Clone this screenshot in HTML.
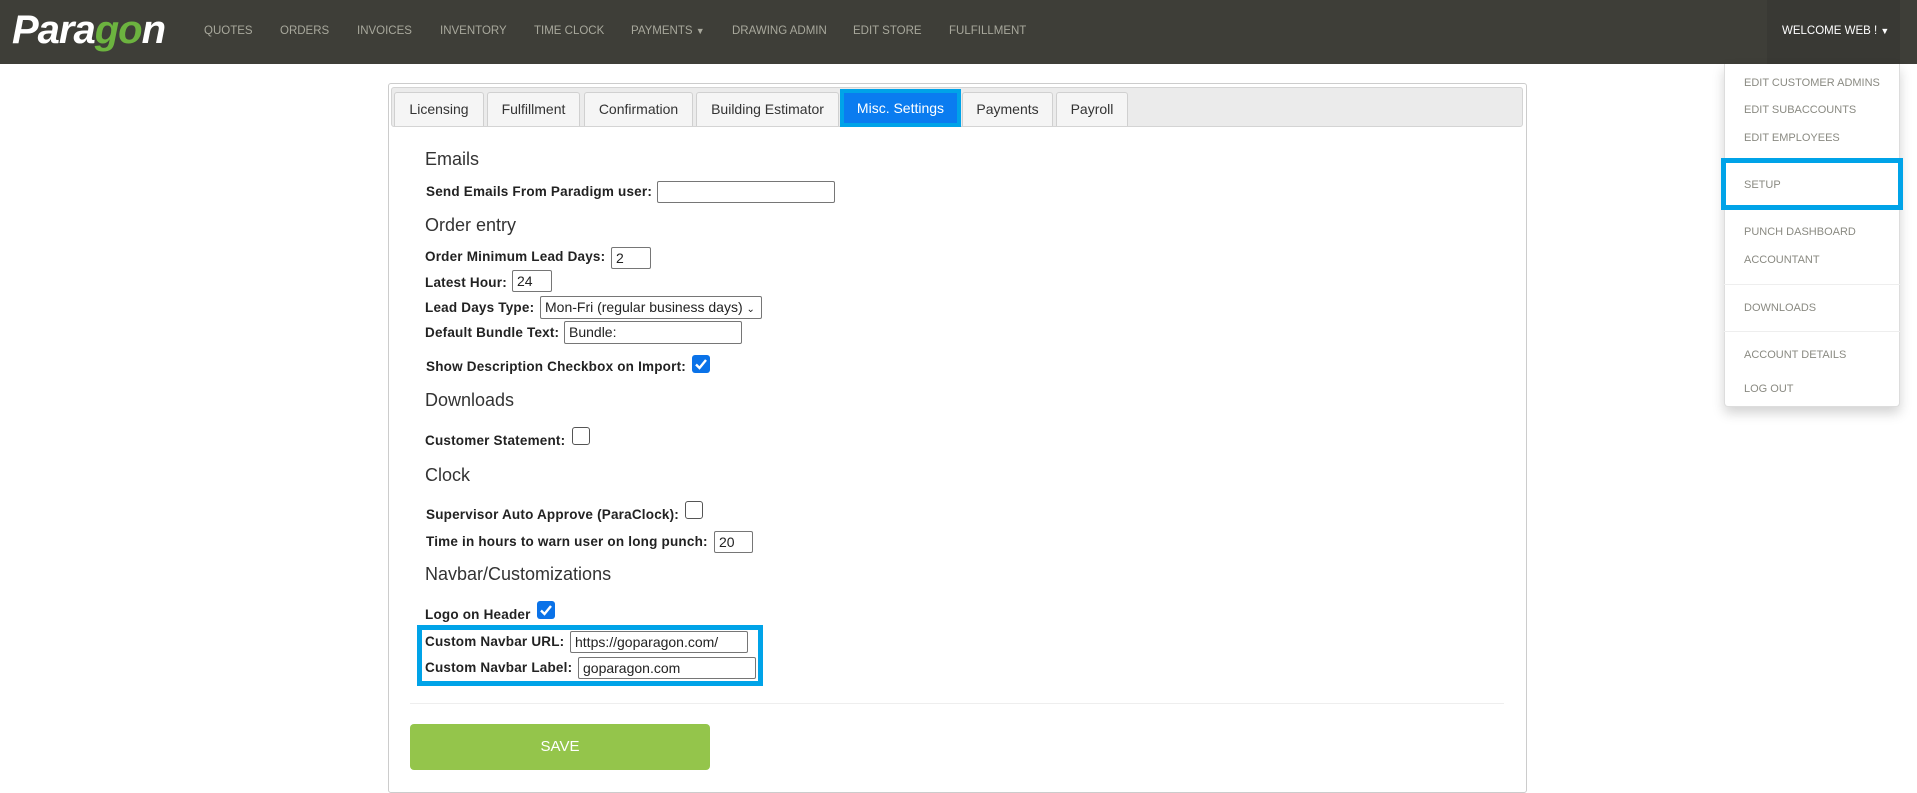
<!DOCTYPE html>
<html><head><meta charset="utf-8"><style>
*{box-sizing:border-box;margin:0;padding:0}
body{width:1917px;height:792px;position:relative;overflow:hidden;background:#fff;font-family:"Liberation Sans",Arial,sans-serif;color:#222}
.a{position:absolute;white-space:nowrap}
.nav{left:0;top:0;width:1917px;height:64px;background:#3e3e38}
.ni{top:25px;font-size:11.5px;color:#a8a89c}
.dd{left:1724px;top:64px;width:176px;height:343px;background:#fff;border:1px solid #ddd;border-top:none;border-radius:0 0 4px 4px;box-shadow:0 6px 12px rgba(0,0,0,.18)}
.di{left:1744px;font-size:11px;color:#8a8a82}
.hr{left:1724px;width:176px;height:1px;background:#eee}
.tab{top:92px;height:34px;background:#f5f5f5;border:1px solid #d0d0d0;border-bottom:none;border-radius:3px 3px 0 0;font-size:14px;color:#333;text-align:center;line-height:33px}
.lb{font-size:13.5px;font-weight:bold;color:#222;letter-spacing:.2px}
.h{font-size:18px;color:#333}
.in{border:1px solid #767676;border-radius:2px;background:#fff;font-size:14px;padding-left:4px;line-height:20px;color:#222}
.cb{width:18px;height:18px;border-radius:3px}
.cb.on{background:#0a72e8}
.cb.off{border:1px solid #555;background:#fff}
</style></head><body>
<div class="a nav"></div>
<div class="a" style="left:1767px;top:0;width:133px;height:64px;background:#393934"></div>
<div class="a" style="left:12px;top:8px;font-size:40px;font-weight:bold;font-style:italic;color:#fff;letter-spacing:-1px;font-family:'Liberation Sans',sans-serif">Para<span style="color:#6cb33f">go</span>n</div>
<div class="a ni" style="left:204px">QUOTES</div>
<div class="a ni" style="left:280px">ORDERS</div>
<div class="a ni" style="left:357px">INVOICES</div>
<div class="a ni" style="left:440px">INVENTORY</div>
<div class="a ni" style="left:534px">TIME CLOCK</div>
<div class="a ni" style="left:631px">PAYMENTS <span style="font-size:9px">▼</span></div>
<div class="a ni" style="left:732px">DRAWING ADMIN</div>
<div class="a ni" style="left:853px">EDIT STORE</div>
<div class="a ni" style="left:949px">FULFILLMENT</div>
<div class="a" style="left:1782px;top:25px;font-size:11.5px;color:#fff">WELCOME WEB ! <span style="font-size:9px">▼</span></div>

<div class="a dd"></div>
<div class="a di" style="top:77px">EDIT CUSTOMER ADMINS</div>
<div class="a di" style="top:104px">EDIT SUBACCOUNTS</div>
<div class="a di" style="top:132px">EDIT EMPLOYEES</div>
<div class="a" style="left:1721px;top:158px;width:182px;height:52px;border:5px solid #00a3e8"></div>
<div class="a di" style="top:179px">SETUP</div>
<div class="a di" style="top:226px">PUNCH DASHBOARD</div>
<div class="a di" style="top:254px">ACCOUNTANT</div>
<div class="a hr" style="top:284px"></div>
<div class="a di" style="top:302px">DOWNLOADS</div>
<div class="a hr" style="top:331px"></div>
<div class="a di" style="top:349px">ACCOUNT DETAILS</div>
<div class="a di" style="top:383px">LOG OUT</div>

<div class="a" style="left:388px;top:83px;width:1139px;height:710px;border:1px solid #ccc;border-radius:3px"></div>
<div class="a" style="left:391px;top:87px;width:1132px;height:40px;background:#ebebeb;border:1px solid #d4d4d4;border-radius:3px"></div>
<div class="a tab" style="left:394px;width:90px">Licensing</div>
<div class="a tab" style="left:487px;width:93px">Fulfillment</div>
<div class="a tab" style="left:584px;width:109px">Confirmation</div>
<div class="a tab" style="left:696px;width:143px">Building Estimator</div>
<div class="a tab" style="left:840px;width:121px;top:89px;height:38px;background:#0a7cf0;border:4px solid #00a3e8;color:#fff;line-height:30px;border-radius:0">Misc. Settings</div>
<div class="a tab" style="left:962px;width:91px">Payments</div>
<div class="a tab" style="left:1056px;width:72px">Payroll</div>

<div class="a h" style="left:425px;top:149px">Emails</div>
<div class="a lb" style="left:426px;top:184px">Send Emails From Paradigm user:</div>
<div class="a in" style="left:657px;top:181px;width:178px;height:22px"></div>
<div class="a h" style="left:425px;top:215px">Order entry</div>
<div class="a lb" style="left:425px;top:249px">Order Minimum Lead Days:</div>
<div class="a in" style="left:611px;top:247px;width:40px;height:22px">2</div>
<div class="a lb" style="left:425px;top:275px">Latest Hour:</div>
<div class="a in" style="left:512px;top:270px;width:40px;height:22px">24</div>
<div class="a lb" style="left:425px;top:300px">Lead Days Type:</div>
<div class="a in" style="left:540px;top:296px;width:222px;height:23px">Mon-Fri (regular business days) <span style="font-size:10px">⌄</span></div>
<div class="a lb" style="left:425px;top:325px">Default Bundle Text:</div>
<div class="a in" style="left:564px;top:321px;width:178px;height:23px">Bundle:</div>
<div class="a lb" style="left:426px;top:359px">Show Description Checkbox on Import:</div>
<div class="a cb on" style="left:692px;top:355px"><svg width="18" height="18"><path d="M4 9.5l3.5 3.5 6.5-8" stroke="#fff" stroke-width="2.4" fill="none"/></svg></div>
<div class="a h" style="left:425px;top:390px">Downloads</div>
<div class="a lb" style="left:425px;top:433px">Customer Statement:</div>
<div class="a cb off" style="left:572px;top:427px"></div>
<div class="a h" style="left:425px;top:465px">Clock</div>
<div class="a lb" style="left:426px;top:507px">Supervisor Auto Approve (ParaClock):</div>
<div class="a cb off" style="left:685px;top:501px"></div>
<div class="a lb" style="left:426px;top:534px">Time in hours to warn user on long punch:</div>
<div class="a in" style="left:714px;top:531px;width:39px;height:22px">20</div>
<div class="a h" style="left:425px;top:564px">Navbar/Customizations</div>
<div class="a lb" style="left:425px;top:607px">Logo on Header</div>
<div class="a cb on" style="left:537px;top:601px"><svg width="18" height="18"><path d="M4 9.5l3.5 3.5 6.5-8" stroke="#fff" stroke-width="2.4" fill="none"/></svg></div>
<div class="a" style="left:417px;top:625px;width:346px;height:61px;border:5px solid #00a3e8"></div>
<div class="a lb" style="left:425px;top:634px">Custom Navbar URL:</div>
<div class="a in" style="left:570px;top:631px;width:178px;height:22px">https://goparagon.com/</div>
<div class="a lb" style="left:425px;top:660px">Custom Navbar Label:</div>
<div class="a in" style="left:578px;top:657px;width:178px;height:22px">goparagon.com</div>
<div class="a" style="left:410px;top:703px;width:1094px;height:1px;background:#eee"></div>
<div class="a" style="left:410px;top:724px;width:300px;height:46px;background:#94c54b;border-radius:4px;color:#fff;font-size:15px;text-align:center;line-height:46px">SAVE</div>
</body></html>
